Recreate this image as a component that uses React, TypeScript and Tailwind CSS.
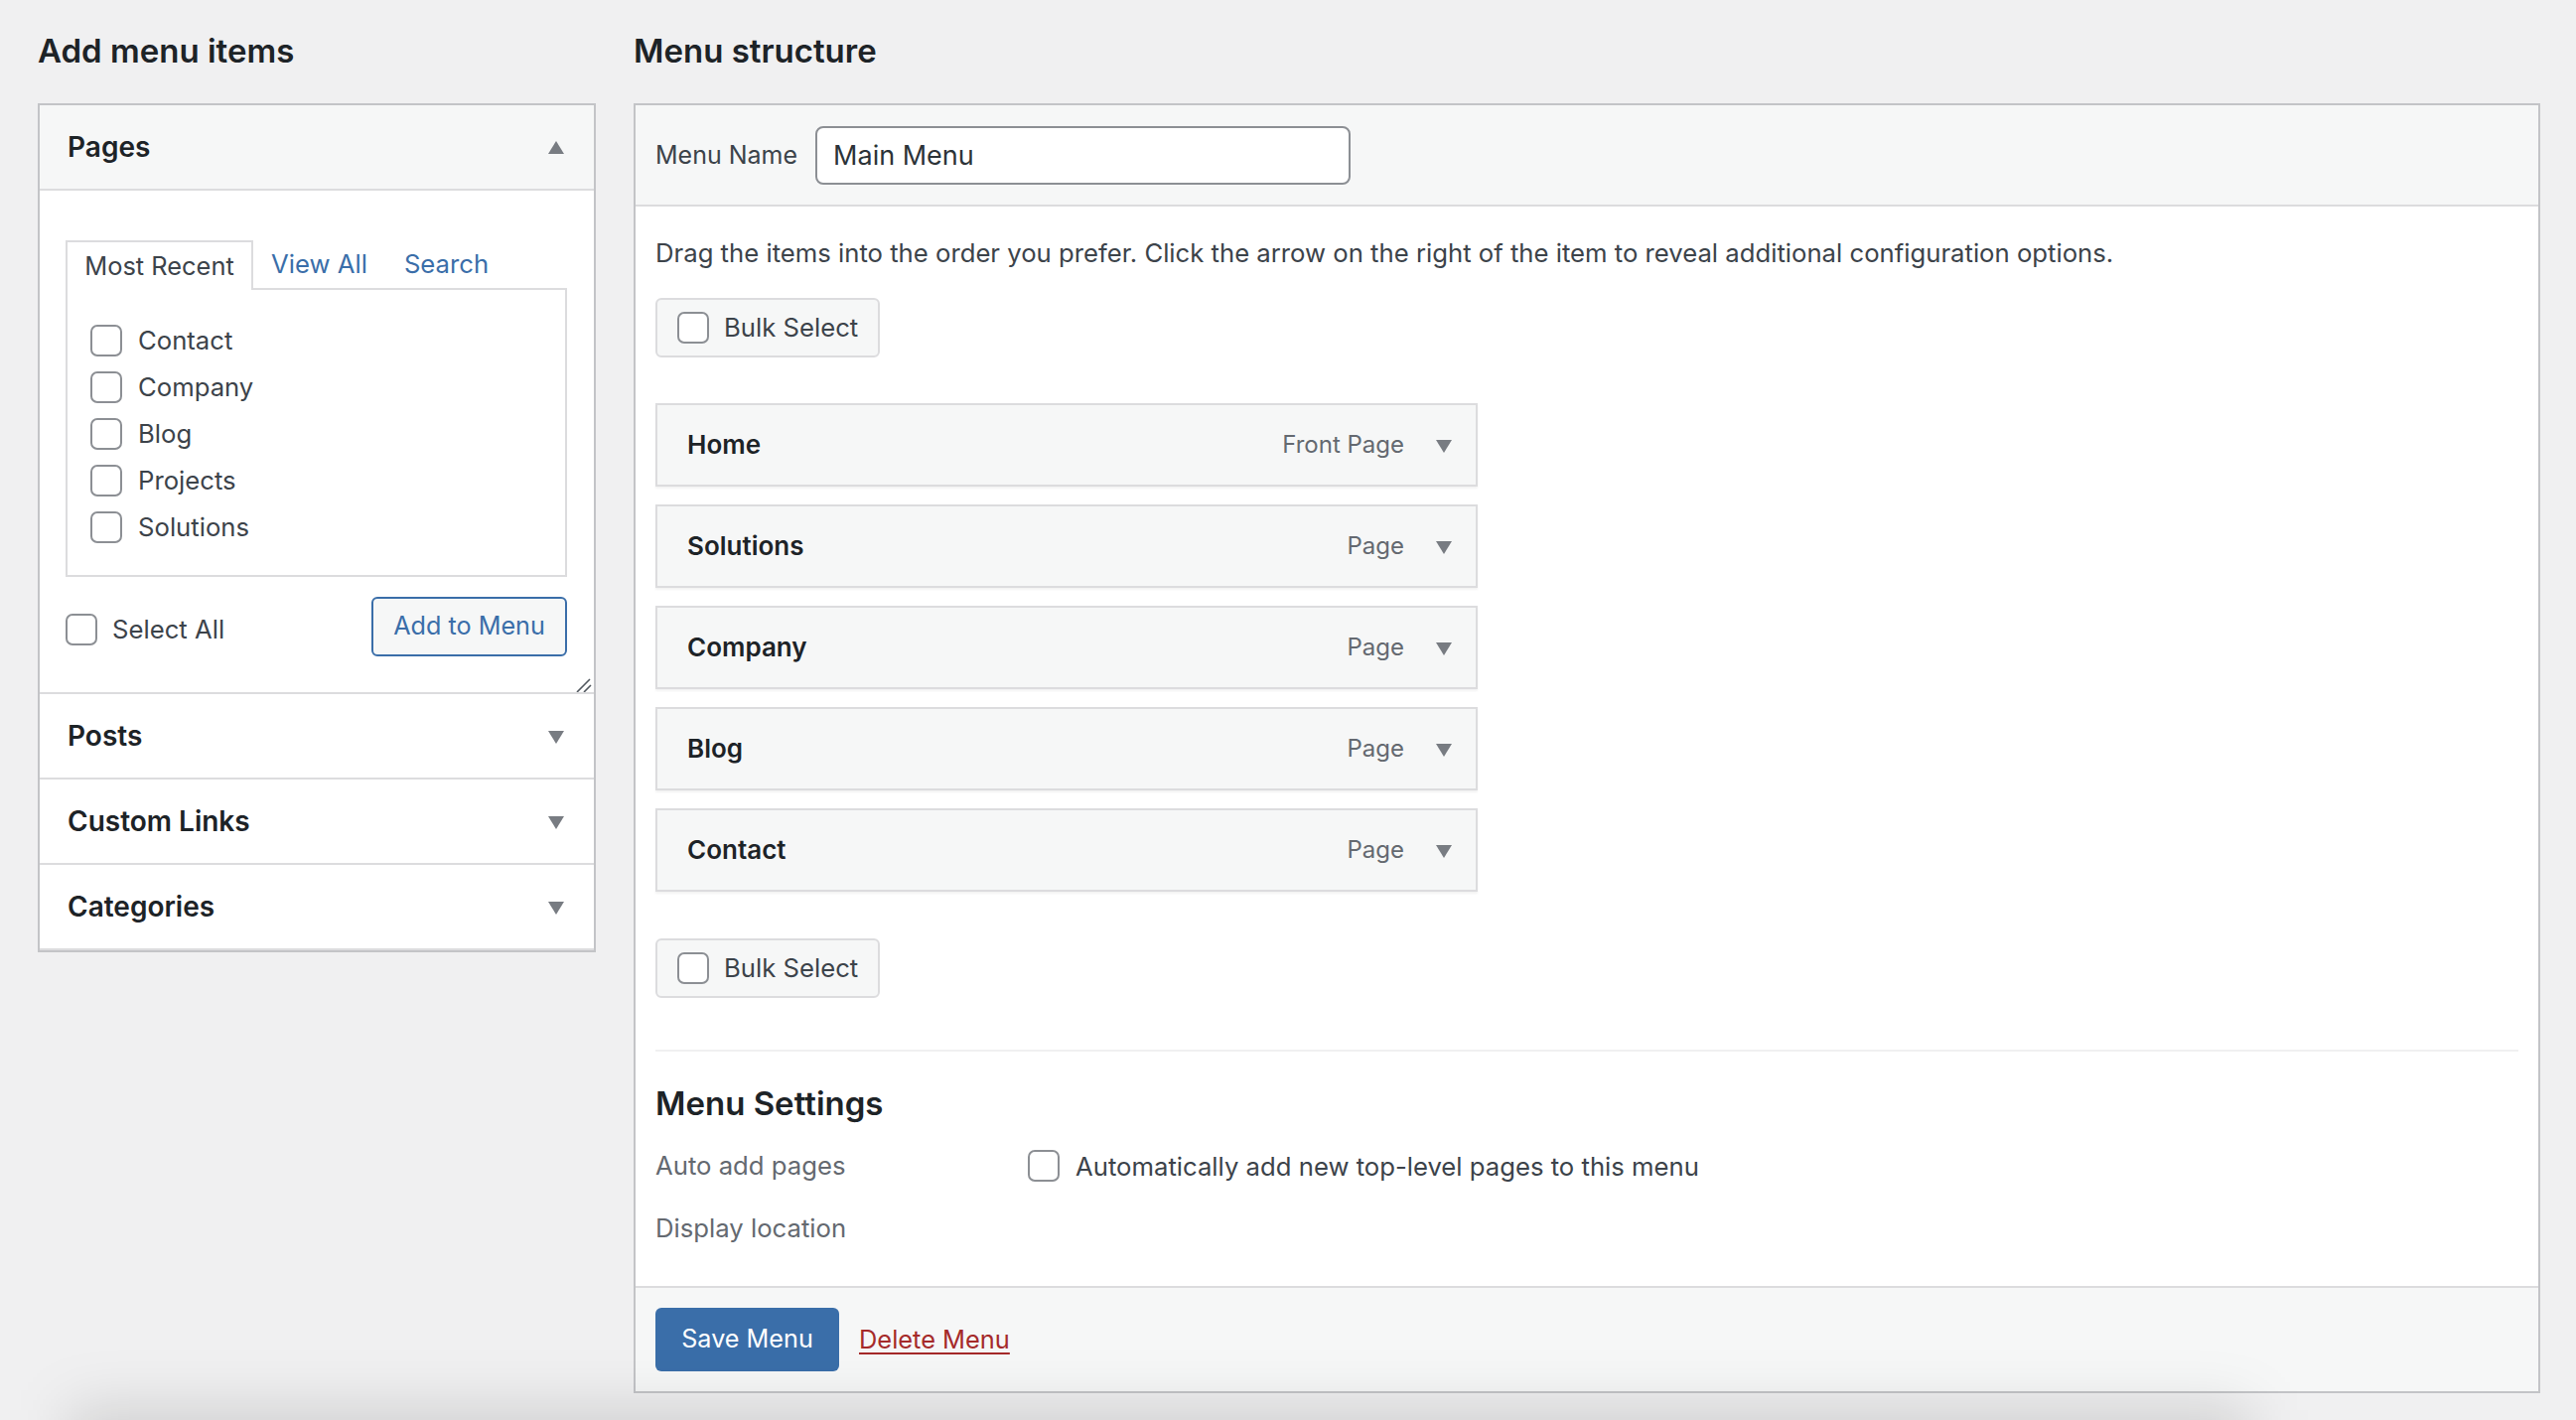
import React from 'react';

const font = { fontFamily: 'Inter, "Liberation Sans", sans-serif' };

function Arrow({ up = false }: { up?: boolean }) {
  return (
    <svg width="16" height="13" viewBox="0 0 16 13" className={`shrink-0 text-[#787c82] ${up ? '' : 'mt-[2px]'}`}>
      <polygon points={up ? '8,0 16,13 0,13' : '0,0 16,0 8,13'} fill="currentColor" />
    </svg>
  );
}

function Check({ className = '' }: { className?: string }) {
  return (
    <input
      type="checkbox"
      className={`appearance-none w-[32px] h-[32px] shrink-0 bg-white border-2 border-[#8c8f94] rounded-[7px] ${className}`}
    />
  );
}

function Section({ title }: { title: string }) {
  return (
    <div className="h-[86px] flex items-center justify-between pl-[28px] pr-[30px] border-b-2 border-[#dcdcde]">
      <span className="text-[28px] font-semibold text-[#1d2327]">{title}</span>
      <Arrow />
    </div>
  );
}

function BulkSelect() {
  return (
    <div className="w-[226px] h-[60px] flex items-center pl-[20px] gap-[15px] bg-[#f6f7f7] border-2 border-[#dcdcde] rounded-[6px]">
      <Check />
      <span className="text-[#3c434a]">Bulk Select</span>
    </div>
  );
}

function MenuItem({ title, kind }: { title: string; kind: string }) {
  return (
    <div className="w-[828px] h-[84px] flex items-center justify-between pl-[30px] pr-[24px] bg-[#f6f7f7] border-2 border-[#dcdcde] shadow-[0_2px_2px_rgba(0,0,0,0.05)]">
      <span className="-mt-[2px] text-[26px] font-semibold text-[#1d2327]">{title}</span>
      <div className="flex items-center gap-[32px]">
        <span className="text-[24px] text-[#646970]">{kind}</span>
        <Arrow />
      </div>
    </div>
  );
}

const pages = ['Contact', 'Company', 'Blog', 'Projects', 'Solutions'];
const items = [
  { title: 'Home', kind: 'Front Page' },
  { title: 'Solutions', kind: 'Page' },
  { title: 'Company', kind: 'Page' },
  { title: 'Blog', kind: 'Page' },
  { title: 'Contact', kind: 'Page' },
];

export default function App() {
  return (
    <div style={font} className="relative w-[2594px] h-[1430px] overflow-hidden bg-[#f0f0f1] text-[25.7px] text-[#3c434a]">
      <div className="flex gap-[38px] pl-[38px]">
        {/* Add menu items */}
        <div className="w-[562px]">
          <h2 className="h-[104px] pt-[29px] text-[33px] leading-[44px] font-semibold text-[#1d2327]">Add menu items</h2>
          <div className="bg-white border-2 border-[#c3c4c7]">
            <div className="h-[86px] flex items-center justify-between pl-[28px] pr-[30px] bg-[#f6f7f7] border-b-2 border-[#dcdcde]">
              <span className="text-[28px] font-semibold text-[#1d2327]">Pages</span>
              <Arrow up />
            </div>

            <div className="relative h-[507px] pt-[50px] pl-[26px] pr-[27px] border-b-2 border-[#dcdcde]">
              <div className="flex items-end h-[48px] text-[#3a6ea9]">
                <div className="relative z-10 -mb-[2px] w-[189px] h-[50px] flex items-center justify-center bg-white border-2 border-b-0 border-[#dcdcde] text-[25.4px] text-[#3c434a]">
                  Most Recent
                </div>
                <span className="self-center ml-[18px]">View All</span>
                <span className="self-center ml-[37px]">Search</span>
              </div>
              <div className="h-[291px] pt-[35px] pl-[23px] border-2 border-[#dcdcde] flex flex-col gap-[15px]">
                {pages.map((p) => (
                  <label key={p} className="flex items-center gap-[16px] h-[32px]">
                    <Check />
                    <span className="mt-[1px]">{p}</span>
                  </label>
                ))}
              </div>
              <div className="flex items-center justify-between mt-[20px]">
                <label className="flex items-center gap-[15px] mt-[6px]">
                  <Check />
                  <span>Select All</span>
                </label>
                <button className="w-[197px] h-[60px] bg-[#f6f7f7] border-2 border-[#3a6ea9] rounded-[6px] text-[25.2px] text-[#3a6ea9]">
                  Add to Menu
                </button>
              </div>
              <svg width="16" height="14" viewBox="0 0 16 14" className="absolute right-[2px] bottom-[0px] text-[#50575e]">
                <path d="M1 14 L14 1 M8 14 L15 7" stroke="currentColor" strokeWidth="1.6" fill="none" />
              </svg>
            </div>

            <Section title="Posts" />
            <Section title="Custom Links" />
            <Section title="Categories" />
          </div>
        </div>

        {/* Menu structure */}
        <div className="w-[1920px]">
          <h2 className="h-[104px] pt-[29px] text-[33px] leading-[44px] font-semibold text-[#1d2327]">Menu structure</h2>
          <div className="h-[1299px] flex flex-col bg-white border-2 border-[#c3c4c7]">
            <div className="h-[102px] shrink-0 flex items-center pl-[20px] gap-[18px] bg-[#f6f7f7] border-b-2 border-[#dcdcde]">
              <span className="mt-[2px] text-[25px]">Menu Name</span>
              <input
                readOnly
                value="Main Menu"
                className="w-[539px] h-[59px] px-[16px] bg-white border-2 border-[#8c8f94] rounded-[8px] text-[27px] text-[#2c3338]"
              />
            </div>

            <div className="flex-1 px-[20px]">
              <p className="mt-[30px] h-[34px] leading-[34px]">
                Drag the items into the order you prefer. Click the arrow on the right of the item to reveal additional configuration options.
              </p>
              <div className="mt-[28px]">
                <BulkSelect />
              </div>
              <div className="mt-[46px] flex flex-col gap-[18px]">
                {items.map((i) => (
                  <MenuItem key={i.title} title={i.title} kind={i.kind} />
                ))}
              </div>
              <div className="mt-[47px]">
                <BulkSelect />
              </div>
              <div className="mt-[52px] h-[2px] bg-[#f0f0f1]" />
              <h3 className="mt-[32px] h-[40px] leading-[40px] text-[33px] font-semibold text-[#1d2327]">Menu Settings</h3>
              <div className="mt-[26px] flex items-center h-[34px]">
                <span className="w-[375px] text-[#646970]">Auto add pages</span>
                <Check />
                <span className="ml-[16px] mt-[2px]">Automatically add new top-level pages to this menu</span>
              </div>
              <div className="mt-[29px] h-[34px] leading-[34px] text-[#646970]">Display location</div>
            </div>

            <div className="h-[106px] shrink-0 flex items-center pl-[20px] gap-[20px] bg-[#f6f7f7] border-t-2 border-[#dcdcde]">
              <button className="w-[185px] h-[64px] bg-[#3a6ea9] rounded-[6px] text-[25.2px] text-white">Save Menu</button>
              <a className="text-[25.4px] text-[#a52a2a] underline decoration-2 underline-offset-4">Delete Menu</a>
            </div>
          </div>
        </div>
      </div>

      {/* soft shadow bleeding in along the bottom edge */}
      <div className="absolute left-[70px] right-[330px] -bottom-[80px] h-[90px] bg-black/[0.14] blur-[30px] pointer-events-none" />
    </div>
  );
}
